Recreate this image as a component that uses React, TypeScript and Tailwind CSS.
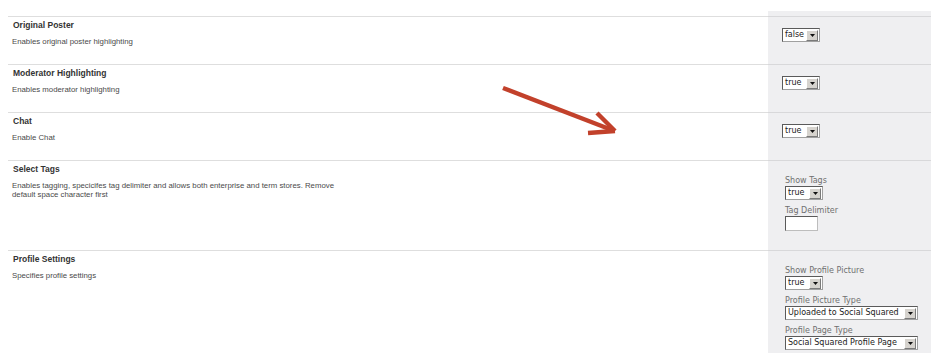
import React from "react";

type Field = { label: string; value: string; width: string };

type Setting = {
  title: string;
  description: React.ReactNode;
  height: string;
  value?: string;
  fields?: Field[];
};

const settings: Setting[] = [
  {
    title: "Original Poster",
    description: "Enables original poster highlighting",
    height: "h-[48px]",
    value: "false",
  },
  {
    title: "Moderator Highlighting",
    description: "Enables moderator highlighting",
    height: "h-[48px]",
    value: "true",
  },
  {
    title: "Chat",
    description: "Enable Chat",
    height: "h-[48px]",
    value: "true",
  },
  {
    title: "Select Tags",
    description: (
      <>
        Enables tagging, specicifes tag delimiter and allows both enterprise and term stores. Remove
        <br />
        default space character first
      </>
    ),
    height: "h-[90px]",
    fields: [{ label: "Show Tags", value: "true", width: "w-[38px]" }],
  },
  {
    title: "Profile Settings",
    description: "Specifies profile settings",
    height: "h-[103px]",
    fields: [
      { label: "Show Profile Picture", value: "true", width: "w-[38px]" },
      { label: "Profile Picture Type", value: "Uploaded to Social Squared", width: "w-[133px]" },
      { label: "Profile Page Type", value: "Social Squared Profile Page", width: "w-[133px]" },
    ],
  },
];

function OldSelect({ value, width }: { value: string; width: string }) {
  return (
    <div
      className={`${width} h-[14px] flex items-center justify-between bg-white border border-t-[#5a5a5a] border-l-[#5a5a5a] border-r-[#a0a0a0] border-b-[#a0a0a0] pl-[2px] pr-[1px]`}
    >
      <span className="text-[8px] leading-none text-[#222] font-['DejaVu_Sans',sans-serif] whitespace-nowrap">
        {value}
      </span>
      <span className="w-[12px] h-[11px] flex items-center justify-center bg-[#d6d3ce] border border-t-white border-l-white border-r-[#7a7a7a] border-b-[#7a7a7a]">
        <svg width="5" height="3" viewBox="0 0 5 3">
          <path d="M0 0 H5 L2.5 3 Z" fill="#111" />
        </svg>
      </span>
    </div>
  );
}

function Label({ children }: { children: React.ReactNode }) {
  return (
    <div className="h-[12px] text-[8px] leading-[13px] text-[#707070] font-['DejaVu_Sans',sans-serif] whitespace-nowrap">
      {children}
    </div>
  );
}

export default function App() {
  return (
    <div className="relative w-[931px] h-[357px] bg-white overflow-hidden font-['Liberation_Sans',Arial,sans-serif]">
      <div className="grid grid-cols-[760px_163px] pl-[8px] h-[16px]">
        <div />
        <div className="mt-[11px] bg-[#efeff1]" />
      </div>

      {settings.map((s) => (
        <div
          key={s.title}
          className={`grid grid-cols-[760px_163px] pl-[8px] ${s.height}`}
        >
          <div className="border-t border-[#dedede] pl-[5px] pt-[1px]">
            <div className="text-[8.5px] leading-[14px] font-bold text-[#333]">
              {s.title}
            </div>
            <p className="mt-[5px] -ml-[1px] text-[7.8px] leading-[9px] text-[#4a4a4a]">
              {s.description}
            </p>
          </div>
          <div className="border-t border-[#d8d8da] bg-[#efeff1]">
            {s.value && (
              <div className="pt-[11px] pl-[14px]">
                <OldSelect value={s.value} width="w-[38px]" />
              </div>
            )}
            {s.fields && (
              <div className="pt-[13px] pl-[17px] flex flex-col gap-[4px]">
                {s.fields.map((f) => (
                  <div key={f.label}>
                    <Label>{f.label}</Label>
                    <OldSelect value={f.value} width={f.width} />
                  </div>
                ))}
                {s.title === "Select Tags" && (
                  <div>
                    <Label>Tag Delimiter</Label>
                    <div className="w-[33px] h-[15px] bg-white border border-t-[#5a5a5a] border-l-[#5a5a5a] border-r-[#bdbdbd] border-b-[#bdbdbd]" />
                  </div>
                )}
              </div>
            )}
          </div>
        </div>
      ))}

      <svg
        className="absolute left-0 top-0 pointer-events-none"
        width="931"
        height="357"
        viewBox="0 0 931 357"
      >
        <g stroke="#c2412b" strokeWidth="4.5" strokeLinecap="butt" fill="none">
          <line x1="503" y1="88" x2="612" y2="130" />
          <line x1="597" y1="113" x2="615" y2="131" />
          <line x1="588" y1="133" x2="615" y2="131" />
        </g>
      </svg>
    </div>
  );
}
